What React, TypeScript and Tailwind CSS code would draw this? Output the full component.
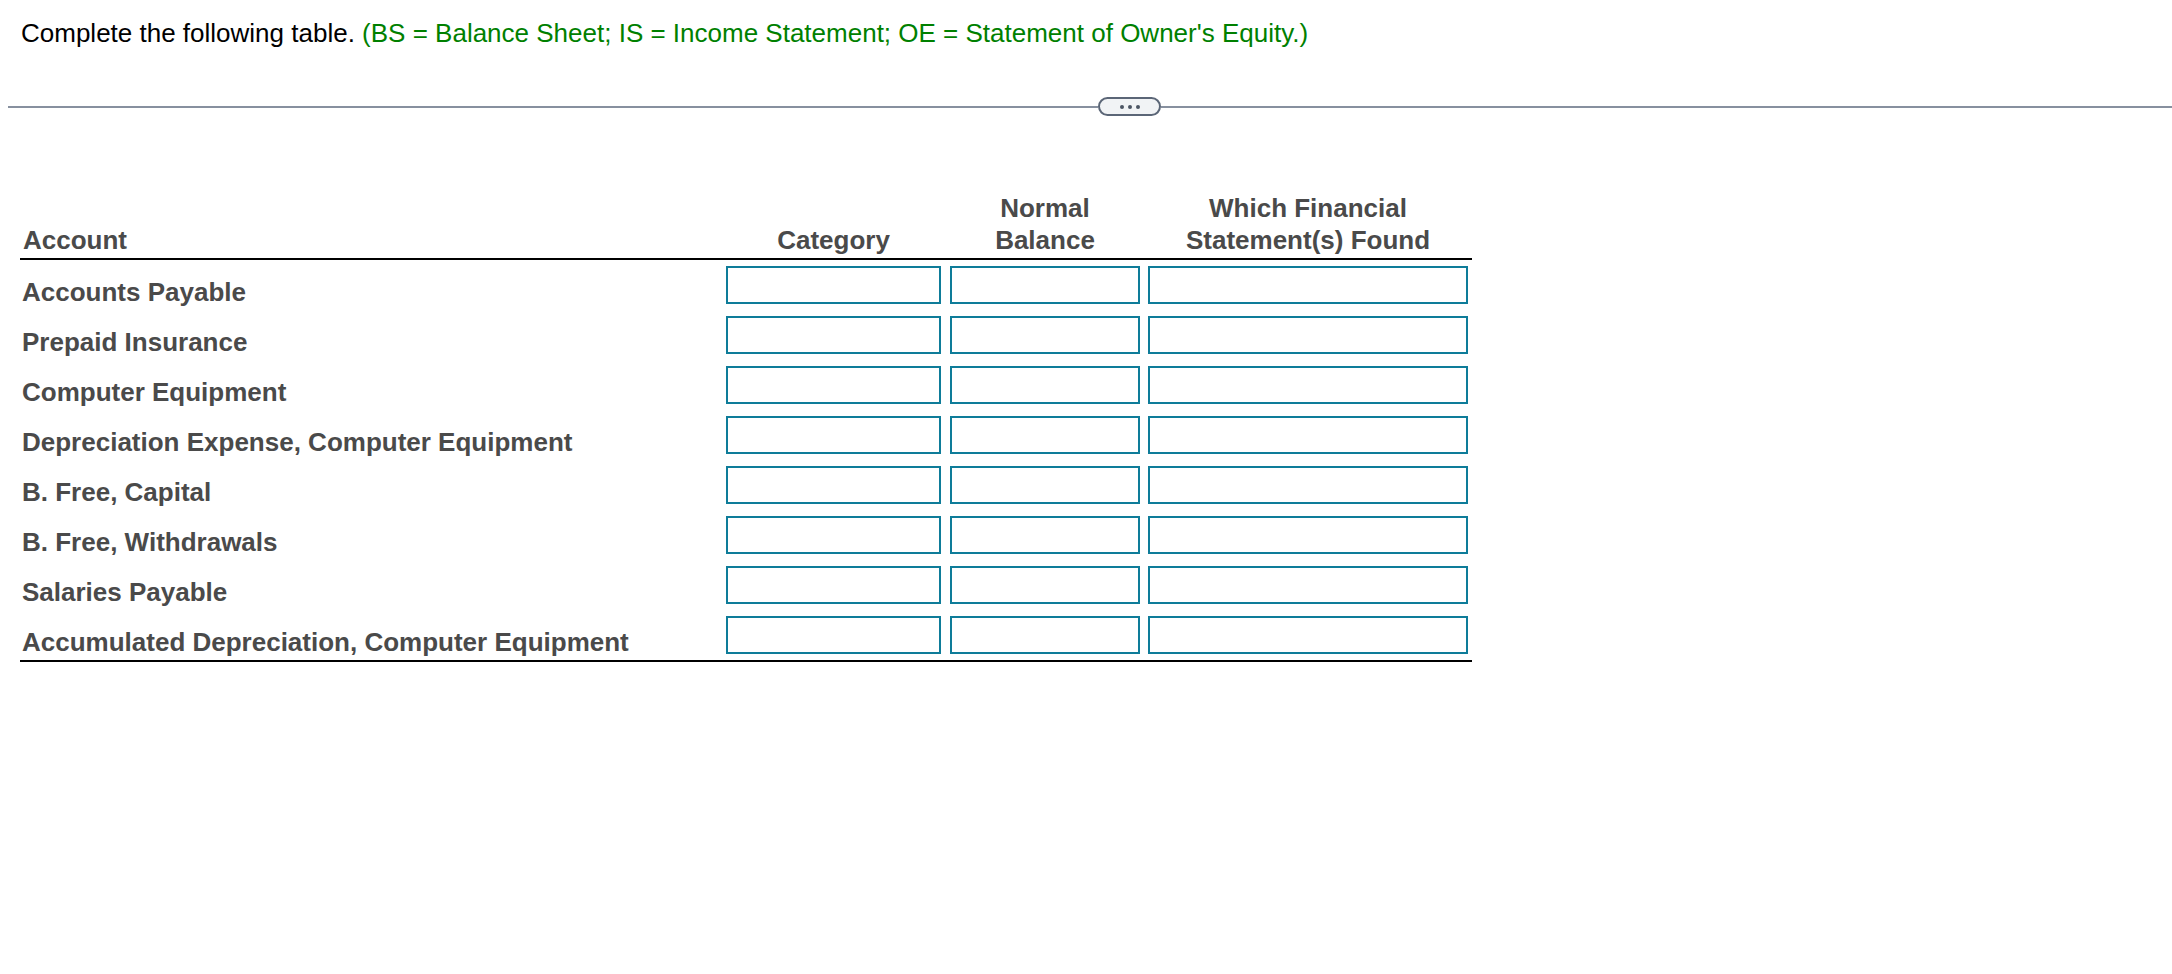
const accounts = [
  "Accounts Payable",
  "Prepaid Insurance",
  "Computer Equipment",
  "Depreciation Expense, Computer Equipment",
  "B. Free, Capital",
  "B. Free, Withdrawals",
  "Salaries Payable",
  "Accumulated Depreciation, Computer Equipment",
];

function Box({ w }: { w: string }) {
  return <div className={`${w} h-[38px] border-2 border-[#0e7c99] bg-white`} />;
}

export default function App() {
  return (
    <div className="min-h-screen bg-white font-['Liberation_Sans',Arial,sans-serif]">
      {/* question prompt */}
      <p className="pl-[21px] pt-[18px] text-[26px] leading-[30px] text-black">
        Complete the following table.{" "}
        <span className="text-[#008000]">
          (BS = Balance Sheet; IS = Income Statement; OE = Statement of Owner's Equity.)
        </span>
      </p>

      {/* divider with collapse pill */}
      <div className="mt-[49px] ml-[8px] flex items-center">
        <div className="h-[2px] w-[1090px] bg-[#87909f]" />
        <div className="flex h-[19px] w-[63px] items-center justify-center gap-[4px] rounded-full border-2 border-[#5b6677] bg-[#f1f3f5]">
          <span className="h-[4px] w-[4px] rounded-full bg-[#4b5563]" />
          <span className="h-[4px] w-[4px] rounded-full bg-[#4b5563]" />
          <span className="h-[4px] w-[4px] rounded-full bg-[#4b5563]" />
        </div>
        <div className="h-[2px] flex-1 bg-[#87909f]" />
      </div>

      {/* table */}
      <div className="ml-[20px] mt-[76px] w-[1452px] text-[26px] font-bold text-[#4a4a4a]">
        <div className="flex items-end border-b-2 border-black pb-[2px] leading-[32px]">
          <div className="w-[706px] pl-[3px]">Account</div>
          <div className="w-[215px] text-center">Category</div>
          <div className="ml-[9px] w-[190px] text-center">
            Normal
            <br />
            Balance
          </div>
          <div className="ml-[8px] w-[320px] text-center">
            Which Financial
            <br />
            Statement(s) Found
          </div>
        </div>
        <div className="border-b-2 border-black">
          {accounts.map((a) => (
            <div key={a} className="flex h-[50px] items-center">
              <div className="w-[706px] pl-[2px] pt-[15px]">{a}</div>
              <Box w="w-[215px]" />
              <div className="ml-[9px]">
                <Box w="w-[190px]" />
              </div>
              <div className="ml-[8px]">
                <Box w="w-[320px]" />
              </div>
            </div>
          ))}
        </div>
      </div>
    </div>
  );
}
